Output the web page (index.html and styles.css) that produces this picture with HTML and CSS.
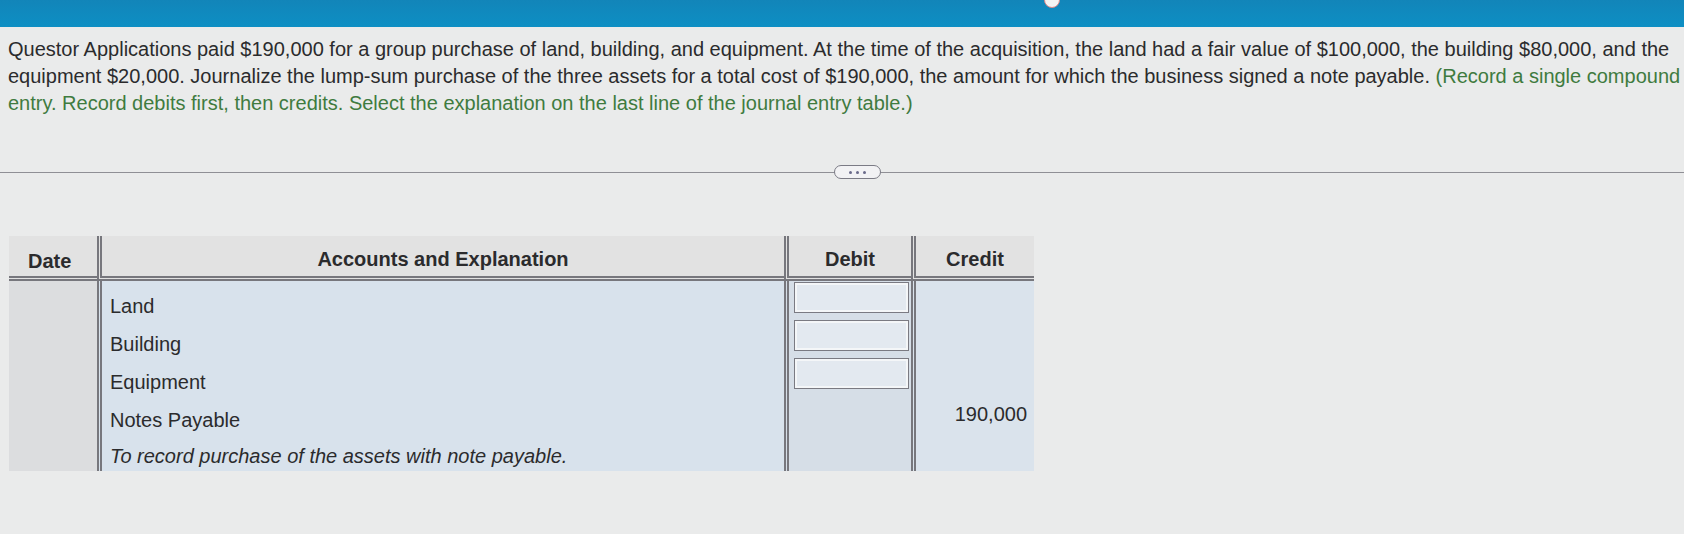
FILE: index.html
```html
<!DOCTYPE html>
<html>
<head>
<meta charset="utf-8">
<link rel="stylesheet" href="styles.css">
</head>
<body>
<div class="topbar"><span class="knob"></span></div>
<div class="question">
  <div class="qline">Questor Applications paid $190,000 for a group purchase of land, building, and equipment. At the time of the acquisition, the land had a fair value of $100,000, the building $80,000, and the</div>
  <div class="qline">equipment $20,000. Journalize the lump-sum purchase of the three assets for a total cost of $190,000, the amount for which the business signed a note payable. <span class="hint">(Record a single compound journal</span></div>
  <div class="qline"><span class="hint">entry. Record debits first, then credits. Select the explanation on the last line of the journal entry table.)</span></div>
</div>
<div class="divider"><button class="more"><span></span><span></span><span></span></button></div>
<div class="journal">
  <div class="hcell c-date">Date</div>
  <div class="hcell c-acct">Accounts and Explanation</div>
  <div class="hcell c-deb">Debit</div>
  <div class="hcell c-cred">Credit</div>

  <div class="bcell c-date"></div>
  <div class="bcell c-acct">Land</div>
  <div class="bcell c-deb"><div class="inbox"></div></div>
  <div class="bcell c-cred"></div>

  <div class="bcell c-date"></div>
  <div class="bcell c-acct">Building</div>
  <div class="bcell c-deb"><div class="inbox"></div></div>
  <div class="bcell c-cred"></div>

  <div class="bcell c-date"></div>
  <div class="bcell c-acct">Equipment</div>
  <div class="bcell c-deb"><div class="inbox"></div></div>
  <div class="bcell c-cred"></div>

  <div class="bcell c-date"></div>
  <div class="bcell c-acct">Notes Payable</div>
  <div class="bcell c-deb"></div>
  <div class="bcell c-cred num">190,000</div>

  <div class="bcell c-date"></div>
  <div class="bcell c-acct expl">To record purchase of the assets with note payable.</div>
  <div class="bcell c-deb"></div>
  <div class="bcell c-cred"></div>
</div>
</body>
</html>
```

FILE: styles.css
```css
html, body {
  margin: 0;
  padding: 0;
}
body {
  background: #eaebeb;
  font-family: "Liberation Sans", Arial, sans-serif;
  color: #2b2b2d;
  overflow: hidden;
  width: 1684px;
  height: 534px;
}
.topbar {
  position: relative;
  height: 27px;
  background: linear-gradient(#1285b9, #0d8fc4);
}
.knob {
  position: absolute;
  left: 1044px;
  top: -8px;
  width: 14px;
  height: 14px;
  border-radius: 50%;
  background: #f4f4f4;
  border: 1px solid #d88;
}
.question {
  margin-top: 9px;
  padding-left: 8px;
  font-size: 20px;
  line-height: 27px;
  white-space: nowrap;
}
.hint {
  color: #3f7b3f;
}
.divider {
  margin-top: 55px;
  height: 1px;
  background: #8f8f95;
  position: relative;
}
.more {
  position: absolute;
  left: 834px;
  top: -7px;
  width: 47px;
  height: 14px;
  border: 1.5px solid #7b7b85;
  border-radius: 7px;
  background: #f2f2f4;
  padding: 0;
  display: flex;
  justify-content: center;
  align-items: center;
  gap: 4px;
}
.more span {
  width: 3px;
  height: 3px;
  border-radius: 50%;
  background: #6a6a8a;
}
.journal {
  margin-top: 63px;
  margin-left: 9px;
  display: grid;
  grid-template-columns: 88px 687px 127px 123px;
  grid-template-rows: 45px repeat(5, 38px) 0;
  width: 1025px;
}
.hcell {
  background: #e2e2e2;
  border-bottom: 5px double #77777d;
  font-weight: bold;
  font-size: 20px;
  display: flex;
  align-items: center;
  justify-content: center;
  padding-top: 7px;
  box-sizing: border-box;
}
.hcell.c-date {
  justify-content: flex-start;
  padding-left: 19px;
  padding-top: 10px;
}
.c-acct, .c-deb, .c-cred {
  border-left: 5px double #77777d;
}
.bcell {
  background: #d8e2ec;
  font-size: 20px;
  box-sizing: border-box;
}
.bcell.c-date {
  background: #dcdddf;
}
.bcell.c-acct {
  padding: 10px 0 0 8px;
  line-height: 30px;
}
.bcell.c-acct.expl {
  font-style: italic;
  padding-top: 8px;
}
.bcell.c-deb {
  background: #d6dee7;
  padding: 1px 0 0 5px;
}
.bcell.c-cred {
  background: #dae3ec;
}
.inbox {
  width: 115px;
  height: 31px;
  box-sizing: border-box;
  border: 1.5px solid #7a7a82;
  background: #e3e9f0;
  box-shadow: inset 0 0 0 2px #f4f6f8;
}
.num {
  text-align: right;
  padding-right: 7px;
  padding-top: 4px;
  line-height: 30px;
}
```
